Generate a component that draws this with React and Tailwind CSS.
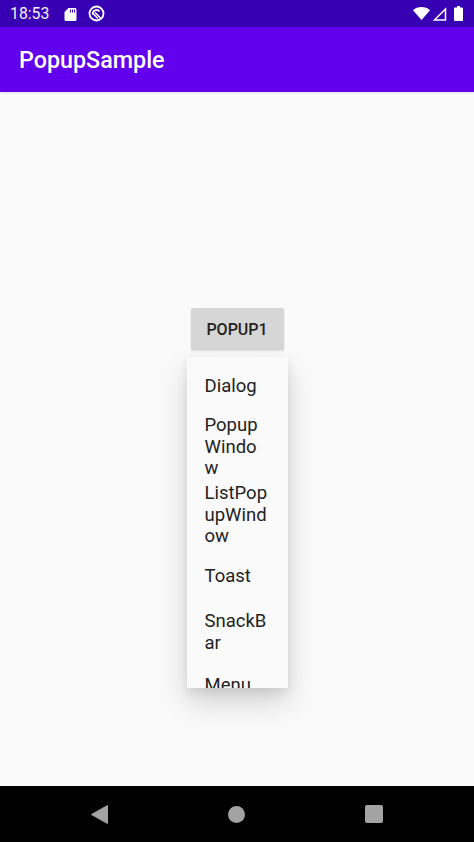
import React from "react";

const items = [
  { label: "Dialog", cls: "h-[57px]" },
  { label: "Popup Window", cls: "h-[65px]" },
  { label: "ListPopupWindow", cls: "mt-[3px] h-[65px]" },
  { label: "Toast", cls: "h-[58px]" },
  { label: "SnackBar", cls: "h-[53px]" },
  { label: "Menu", cls: "h-[54px]" },
];

function StatusBar() {
  return (
    <div className="h-[27px] bg-[#3700b3] flex items-center pl-[10px] pr-[11px] text-white">
      <span className="text-[15.800px] leading-none opacity-95">18:53</span>
      <svg className="ml-[15px]" width="13" height="14" viewBox="0 0 13 14" fill="#fff">
        <path d="M4.500 1H11a1.500 1.500 0 0 1 1.500 1.500v10A1.500 1.500 0 0 1 11 14H2a1.500 1.500 0 0 1-1.500-1.500V5zM6 2.500v3h1v-3zM8 2.500v3h1v-3zM10 2.500v3h1v-3z" fillRule="evenodd" />
      </svg>
      <svg className="ml-[11px]" width="17" height="17" viewBox="0 0 17 17" fill="none" stroke="#fff" strokeWidth="1.800">
        <circle cx="8.500" cy="8.500" r="7" />
        <path d="M4.800 9.500A3.800 3.800 0 0 1 11.500 6.500" />
        <path d="M4.500 8L10 13.500M7 7.500L12.500 13" strokeWidth="1.500" />
      </svg>
      <div className="ml-auto flex items-center">
        <svg width="17" height="13" viewBox="0 0 17 13" fill="#fff">
          <path d="M0 3.200C2.300 1.200 5.200 0 8.500 0s6.200 1.200 8.500 3.200L8.500 13z" />
        </svg>
        <svg className="ml-[2px]" width="15" height="14" viewBox="0 0 15 14" fill="none" stroke="#fff" strokeWidth="1.500">
          <path d="M13.500 2v11H2.500z" />
        </svg>
        <svg className="ml-[7px]" width="9" height="15" viewBox="0 0 9 15" fill="#fff">
          <path d="M3 0h3v1.500h2a1 1 0 0 1 1 1V14a1 1 0 0 1-1 1H1a1 1 0 0 1-1-1V2.500a1 1 0 0 1 1-1h2z" />
        </svg>
      </div>
    </div>
  );
}

function NavBar() {
  return (
    <div className="h-[56px] bg-black flex items-center pl-[91px] pr-[91px] justify-between">
      <svg width="17" height="19" viewBox="0 0 17 19" fill="#a3a3a3">
        <path d="M16.500 0.500V18.500L0.500 9.500z" stroke="#a3a3a3" strokeLinejoin="round" />
      </svg>
      <div className="w-[17px] h-[17px] rounded-full bg-[#a3a3a3]" />
      <div className="w-[18px] h-[18px] rounded-[2px] bg-[#a3a3a3]" />
    </div>
  );
}

export default function App() {
  return (
    <div className="w-[474px] h-[842px] flex flex-col bg-[#fafafa] overflow-hidden font-['Roboto',sans-serif]">
      <StatusBar />
      <div className="h-[65px] bg-[#6200ee] flex items-center pl-[19px] pt-[3px] shadow-[0_1px_2px_rgba(0,0,0,0.12)]">
        <h1 className="text-[23.300px] font-medium text-white leading-none">PopupSample</h1>
      </div>

      <div className="flex-1 flex flex-col items-center pt-[216px]">
        <button className="w-[93px] h-[42px] rounded-[2px] bg-[#d6d6d6] text-[#222222] text-[16px] font-medium pt-[1px] shadow-[0_1px_2px_rgba(0,0,0,0.12)]">
          POPUP1
        </button>

        <div className="mt-[7px] w-[101px] h-[331px] overflow-hidden bg-[#fafafa] shadow-[0_14px_28px_rgba(0,0,0,0.16),0_5px_10px_rgba(0,0,0,0.08)]">
          {items.map((item) => (
            <div key={item.label} className={`flex items-center pl-[18px] pr-[19px] pt-[2px] text-[18.500px] leading-[21.500px] text-[#222222] break-all ${item.cls}`}>
              <span>{item.label}</span>
            </div>
          ))}
        </div>
      </div>

      <NavBar />
    </div>
  );
}
